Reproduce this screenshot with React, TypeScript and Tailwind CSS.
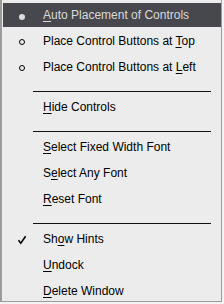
type Mark = "bullet" | "radio" | "check" | null;

interface ItemProps {
  before: string;
  key_: string;
  after: string;
  mark?: Mark;
  active?: boolean;
}

const Icon = ({ mark, active }: { mark: Mark; active?: boolean }) => {
  if (mark === "bullet")
    return <span className={`block w-[6px] h-[6px] rounded-full mt-[3px] ${active ? "bg-[#dcdcdc]" : "bg-black"}`} />;
  if (mark === "radio")
    return <span className="block w-[6px] h-[6px] rounded-full border border-black mt-[2px]" />;
  if (mark === "check")
    return (
      <svg width="10" height="10" viewBox="0 0 10 10" className="mt-[1px]">
        <path d="M1.5 5.2 L3.8 8.2 L8.6 1.2" fill="none" stroke="#000" strokeWidth="1.6" />
      </svg>
    );
  return null;
};

const Item = ({ before, key_, after, mark = null, active }: ItemProps) => (
  <div
    className={`flex shrink-0 items-center h-[24px] my-[1px] ml-[1px] ${
      active ? "bg-[#47474e] text-[#dadada]" : "text-black"
    }`}
  >
    <span className="w-[40px] pr-[2px] flex justify-center items-center">
      <Icon mark={mark} active={active} />
    </span>
    <span className="whitespace-nowrap">
      {before}
      <span className="underline underline-offset-[2px]">{key_}</span>
      {after}
    </span>
  </div>
);

const Separator = () => <div className="shrink-0 h-px bg-[#111] ml-[31px] w-[178px] mt-[11px] mb-[2px]" />;

export default function App() {
  return (
    <div className="w-[224px] h-[304px] bg-[#f3f3f3] overflow-hidden">
      <div
        className="w-[222px] h-[302px] bg-[#ececec] border-l-2 border-r border-b border-[#9c9c9c] pt-[2px] flex flex-col text-[12px] leading-none"
        style={{ fontFamily: '"Liberation Sans", Arial, sans-serif' }}
      >
        <Item before="" key_="A" after="uto Placement of Controls" mark="bullet" active />
        <Item before="Place Control Buttons at " key_="T" after="op" mark="radio" />
        <Item before="Place Control Buttons at " key_="L" after="eft" mark="radio" />
        <Separator />
        <Item before="" key_="H" after="ide Controls" />
        <Separator />
        <Item before="" key_="S" after="elect Fixed Width Font" />
        <Item before="S" key_="e" after="lect Any Font" />
        <Item before="" key_="R" after="eset Font" />
        <Separator />
        <Item before="Sh" key_="o" after="w Hints" mark="check" />
        <Item before="" key_="U" after="ndock" />
        <Item before="" key_="D" after="elete Window" />
      </div>
    </div>
  );
}
